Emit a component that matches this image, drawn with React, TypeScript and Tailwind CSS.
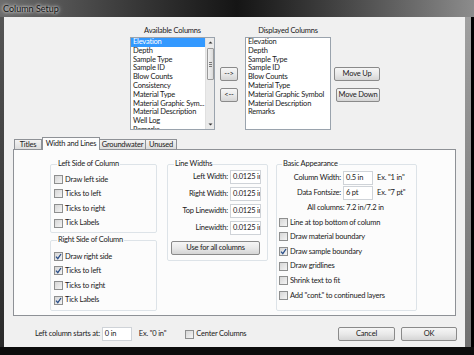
import React from 'react';

const available = [
  'Elevation',
  'Depth',
  'Sample Type',
  'Sample ID',
  'Blow Counts',
  'Consistency',
  'Material Type',
  'Material Graphic Sym...',
  'Material Description',
  'Well Log',
  'Remarks',
];

const displayed = [
  'Elevation',
  'Depth',
  'Sample Type',
  'Sample ID',
  'Blow Counts',
  'Material Type',
  'Material Graphic Symbol',
  'Material Description',
  'Remarks',
];

const Check: React.FC<{ label: string; checked?: boolean; className?: string }> = ({ label, checked, className }) => (
  <div className={`flex items-center h-[14.6px] ${className ?? ''}`}>
    <span className="w-[9px] h-[9px] border border-[#8e8f8f] bg-gradient-to-br from-[#d6d6d6] to-[#f4f4f4] flex items-center justify-center shrink-0">
      {checked && (
        <svg width="7" height="7" viewBox="0 0 7 7">
          <path d="M1 3.6 L2.8 5.6 L6 1" fill="none" stroke="#2a4f8a" strokeWidth="1.3" />
        </svg>
      )}
    </span>
    <span className="ml-[2px] whitespace-nowrap">{label}</span>
  </div>
);

const Btn: React.FC<{ children: React.ReactNode; className?: string }> = ({ children, className }) => (
  <div
    className={`h-[14px] border border-[#8a8a8a] rounded-[2px] bg-gradient-to-b from-[#f6f6f6] via-[#e9e9e9] to-[#d5d5d5] flex items-center justify-center whitespace-nowrap ${className ?? ''}`}
  >
    {children}
  </div>
);

const Field: React.FC<{ value: string; className?: string }> = ({ value, className }) => (
  <div className={`h-[14px] bg-white border border-[#cfd3d8] pl-[2px] leading-[11px] overflow-hidden whitespace-nowrap ${className ?? ''}`}>
    {value}
  </div>
);

const Group: React.FC<{ title: string; className?: string; children: React.ReactNode }> = ({ title, className, children }) => (
  <fieldset className={`border border-[#dde3e8] rounded-[2px] ${className ?? ''}`}>
    <legend className="ml-[3px] px-[1px] leading-[10px] whitespace-nowrap">{title}</legend>
    {children}
  </fieldset>
);

const ListBox: React.FC<{ items: string[]; selected?: number; scroll?: boolean; className?: string }> = ({
  items,
  selected,
  scroll,
  className,
}) => (
  <div className={`h-[93px] bg-white border border-[#9aa3ad] flex overflow-hidden ${className ?? ''}`}>
    <div className="flex-1 overflow-hidden">
      {items.map((it, i) => (
        <div
          key={it}
          className={`h-[8.8px] leading-[8.8px] pl-[2px] whitespace-nowrap ${i === selected ? 'bg-[#3399ff] text-white' : ''}`}
        >
          {it}
        </div>
      ))}
    </div>
    {scroll && (
      <div className="w-[9px] bg-[#eaeaea] border-l border-[#e0e0e0] flex flex-col items-center">
        <svg width="9" height="9" viewBox="0 0 9 9">
          <path d="M2.5 5.5 L4.5 3.5 L6.5 5.5 Z" fill="#333" />
        </svg>
        <div className="w-[7px] h-[32px] mt-[1px] border border-[#9a9a9a] rounded-[1px] bg-gradient-to-r from-[#f2f2f2] to-[#dadada] flex flex-col items-center justify-center gap-[1px]">
          <span className="w-[3px] h-[1px] bg-[#777]" />
          <span className="w-[3px] h-[1px] bg-[#777]" />
          <span className="w-[3px] h-[1px] bg-[#777]" />
        </div>
        <div className="flex-1" />
        <svg width="9" height="9" viewBox="0 0 9 9">
          <path d="M2.5 3.5 L4.5 5.5 L6.5 3.5 Z" fill="#333" />
        </svg>
      </div>
    )}
  </div>
);

const App: React.FC = () => {
  return (
    <div className="w-[474px] h-[355px] bg-black flex flex-col overflow-hidden [font-family:Lato,sans-serif] text-[7.5px] tracking-[-0.2px] text-[#1a1a1a]">
      {/* title bar */}
      <div className="h-[17px] flex items-center pl-[3px] bg-gradient-to-r from-[#6c6c6c] via-[#151515] to-[#8c8c8c]">
        <span className="text-[9px] tracking-normal text-[#111] [text-shadow:0_0_3px_#fff,0_0_5px_#ddd]">Column Setup</span>
      </div>

      <div className="flex h-[330px]">
        <div className="w-[4px] bg-gradient-to-b from-[#555] to-[#2a2a2a]" />

        {/* client area */}
        <div className="w-[461px] bg-[#f0f0f0] flex flex-col pl-[9px]">
          {/* columns section */}
          <div className="h-[120px] flex pt-[8px] pl-[117px]">
            <div className="w-[85px] flex flex-col items-center">
              <div className="h-[12px] leading-[12px] whitespace-nowrap">Available Columns</div>
              <ListBox items={available} selected={0} scroll className="w-full" />
            </div>
            <div className="ml-[5px] w-[18px] pt-[42px] flex flex-col gap-[7px]">
              <Btn className="w-[18px]">--&gt;</Btn>
              <Btn className="w-[18px]">&lt;--</Btn>
            </div>
            <div className="ml-[7px] w-[86px] flex flex-col items-center">
              <div className="h-[12px] leading-[12px] whitespace-nowrap">Displayed Columns</div>
              <ListBox items={displayed} className="w-full" />
            </div>
            <div className="ml-[3px] pt-[42px] flex flex-col items-end gap-[7px]">
              <Btn className="w-[46px]">Move Up</Btn>
              <Btn className="w-[44px]">Move Down</Btn>
            </div>
          </div>

          {/* tabs */}
          <div className="h-[12px] flex items-end pl-[1px] relative z-10 whitespace-nowrap">
            <div className="h-[10px] w-[28px] border border-b-0 border-[#8e9196] bg-gradient-to-b from-[#f3f3f3] to-[#dcdcdc] leading-[9px] text-center">Titles</div>
            <div className="h-[13px] w-[58px] border border-b-0 border-[#8e9196] bg-[#fcfcfc] leading-[11px] text-center -mb-[1px]">Width and Lines</div>
            <div className="h-[10px] w-[46px] border border-b-0 border-l-0 border-[#8e9196] bg-gradient-to-b from-[#f3f3f3] to-[#dcdcdc] leading-[9px] text-center">Groundwater</div>
            <div className="h-[10px] w-[31px] border border-b-0 border-l-0 border-[#8e9196] bg-gradient-to-b from-[#f3f3f3] to-[#dcdcdc] leading-[9px] text-center">Unused</div>
          </div>

          {/* tab panel */}
          <div className="w-[443px] h-[167px] border border-[#8e9196] bg-[#fcfcfc] flex pl-[36px] pt-[9px]">
            {/* left column */}
            <div className="w-[107px] flex flex-col">
              <Group title="Left Side of Column" className="h-[74px] pl-[3px] pt-[3px]">
                <Check label="Draw left side" />
                <Check label="Ticks to left" />
                <Check label="Ticks to right" />
                <Check label="Tick Labels" />
              </Group>
              <Group title="Right Side of Column" className="h-[76px] mt-[2px] pl-[3px] pt-[4px]">
                <Check label="Draw right side" checked />
                <Check label="Ticks to left" checked />
                <Check label="Ticks to right" />
                <Check label="Tick Labels" checked />
              </Group>
            </div>

            {/* line widths */}
            <Group title="Line Widths" className="ml-[10px] w-[101px] h-[102px] pl-[3px] pr-[6px] pt-[1px]">
              <div className="flex flex-col gap-[3px] items-end">
                {['Left Width:', 'Right Width:', 'Top Linewidth:', 'Linewidth:'].map((l) => (
                  <div key={l} className="flex items-center">
                    <span className="mr-[2px] whitespace-nowrap">{l}</span>
                    <Field value="0.0125 in" className="w-[31px]" />
                  </div>
                ))}
              </div>
              <Btn className="w-[89px] mt-[6px]">Use for all columns</Btn>
            </Group>

            {/* basic appearance */}
            <Group title="Basic Appearance" className="ml-[8px] w-[141px] h-[152px] pl-[2px] pt-[2px]">
              <div className="flex items-center">
                <span className="w-[62px] text-right mr-[2px] whitespace-nowrap">Column Width:</span>
                <Field value="0.5 in" className="w-[30px]" />
                <span className="ml-[4px] whitespace-nowrap">Ex. "1 in"</span>
              </div>
              <div className="flex items-center mt-[1px]">
                <span className="w-[62px] text-right mr-[2px] whitespace-nowrap">Data Fontsize:</span>
                <Field value="6 pt" className="w-[30px]" />
                <span className="ml-[4px] whitespace-nowrap">Ex. "7 pt"</span>
              </div>
              <div className="h-[15px] leading-[15px] text-center pr-[4px] whitespace-nowrap">All columns: 7.2 in/7.2 in</div>
              <div className="flex flex-col">
                <Check label="Line at top  bottom of column" />
                <Check label="Draw material boundary" />
                <Check label="Draw sample boundary" checked />
                <Check label="Draw gridlines" />
                <Check label="Shrink text to fit" />
                <Check label={'Add "cont." to continued layers'} />
              </div>
            </Group>
          </div>

          {/* bottom row */}
          <div className="h-[14px] mt-[11px] flex items-center">
            <span className="ml-[22px] whitespace-nowrap">Left column starts at:</span>
            <Field value="0 in" className="w-[30px] ml-[2px]" />
            <span className="ml-[7px] whitespace-nowrap">Ex. "0 in"</span>
            <Check label="Center Columns" className="ml-[19px]" />
            <div className="flex-1" />
            <Btn className="w-[57px]">Cancel</Btn>
            <Btn className="w-[56px] ml-[6px]">OK</Btn>
            <div className="w-[8px]" />
          </div>
        </div>

        <div className="w-[6px] bg-gradient-to-b from-[#a0a0a0] to-[#707070]" />
        <div className="flex-1 bg-black" />
      </div>
      <div className="flex-1 bg-[#0c0c0c]" />
    </div>
  );
};

export default App;
